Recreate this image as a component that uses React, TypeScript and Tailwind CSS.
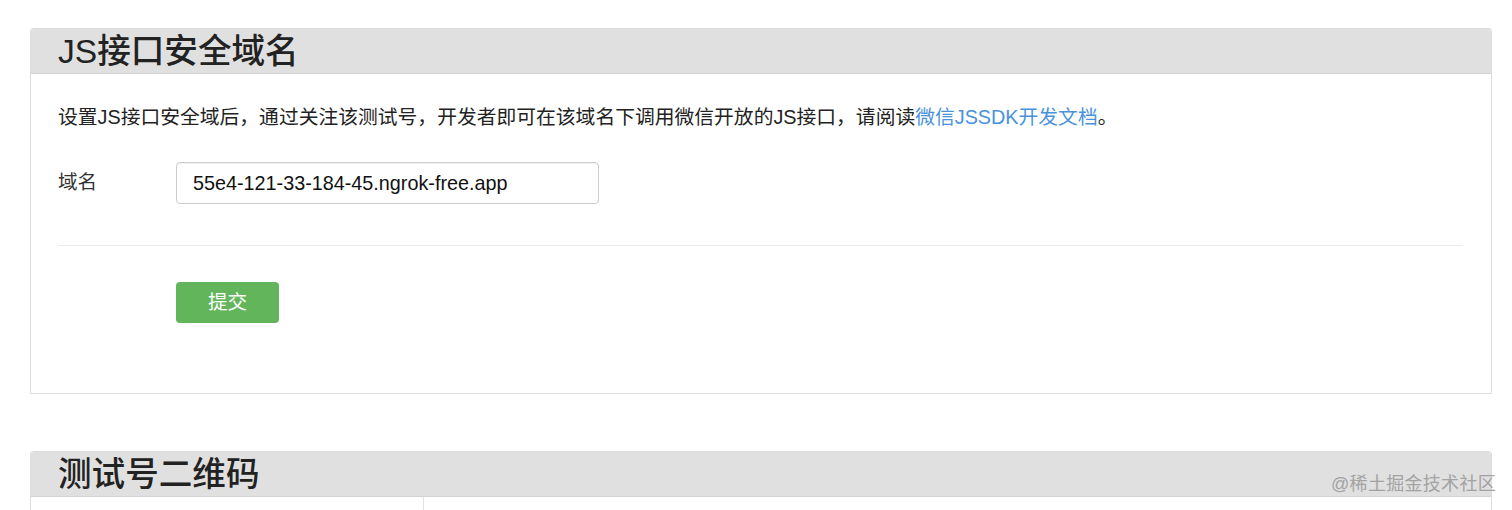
const font = { fontFamily: '"Liberation Sans", "Noto Sans CJK SC", sans-serif' }

function PanelHeader({ title }: { title: string }) {
  return (
    <div className="h-[45px] bg-[#e0e0e0] border-b border-[#d2d2d2] rounded-t-[3px] px-[27px] flex items-center">
      <h2 className="text-[33.6px] leading-none text-[#222] font-medium pt-[2px]">{title}</h2>
    </div>
  )
}

export default function App() {
  return (
    <div className="relative bg-white h-[510px] overflow-hidden pl-[30px] pr-[20px] pt-[28px]" style={font}>
      <section className="border border-[#dcdcdc] rounded-t-[3px]">
        <PanelHeader title="JS接口安全域名" />
        <div className="px-[27px] pr-[28px] pt-[29px] pb-[70px]">
          <p className="text-[19.8px] leading-[28px] text-[#222]">
            设置JS接口安全域后，通过关注该测试号，开发者即可在该域名下调用微信开放的JS接口，请阅读
            <a className="text-[#4a92dc]">微信JSSDK开发文档</a>。
          </p>
          <div className="flex items-center mt-[31px]">
            <label className="w-[118px] text-[19.6px] text-[#333]">域名</label>
            <input
              className="w-[423px] h-[42px] border border-[#cccccc] rounded-[4px] px-[16px] text-[19.8px] text-[#111] outline-none shadow-[inset_0_1px_1px_rgba(0,0,0,0.06)]"
              defaultValue="55e4-121-33-184-45.ngrok-free.app"
            />
          </div>
          <div className="border-t border-[#ebebeb] mt-[41px]" />
          <div className="pl-[118px] mt-[36px]">
            <button className="w-[103px] h-[41px] bg-[#62b55a] rounded-[4px] text-white text-[19.6px] leading-none">
              提交
            </button>
          </div>
        </div>
      </section>

      <section className="border border-[#dcdcdc] rounded-t-[3px] mt-[57px]">
        <PanelHeader title="测试号二维码" />
        <div className="flex h-[40px]">
          <div className="w-[393px] border-r border-[#e2e2e2]" />
          <div className="flex-1" />
        </div>
      </section>

      <div className="absolute right-[16px] top-[472px] text-[18px] leading-[24px] text-[#a3a3a3] tracking-[0.3px]">
        @稀土掘金技术社区
      </div>
    </div>
  )
}
